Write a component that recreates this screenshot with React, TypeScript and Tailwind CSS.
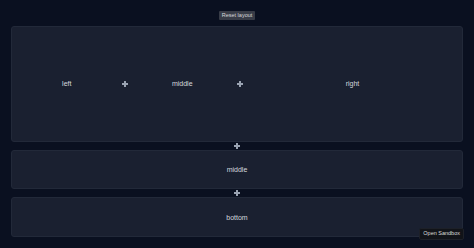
import React from 'react'

const font = { fontFamily: '"Liberation Sans", Arial, sans-serif' }

function Grip() {
  return (
    <svg width="6" height="6" viewBox="0 0 6 6" className="text-[#9aa3b2]">
      <path d="M3 0.5v5M0.5 3h5" stroke="currentColor" strokeWidth="2" strokeLinecap="round" />
    </svg>
  )
}

function VHandle() {
  return (
    <div className="w-[6px] flex items-center justify-center">
      <Grip />
    </div>
  )
}

function HHandle() {
  return (
    <div className="h-[8px] flex items-center justify-center">
      <Grip />
    </div>
  )
}

function Label({ children }: { children: React.ReactNode }) {
  return <span className="text-[7px] leading-none text-[#d5d8de]">{children}</span>
}

export default function App() {
  return (
    <div className="h-screen w-full bg-[#0a1020] px-[11px] pt-[11px] pb-[11px] flex flex-col" style={font}>
      {/* Toolbar */}
      <div className="flex justify-center mb-[6px]">
        <button className="h-[9px] px-[2.5px] bg-[#383c47] text-[5.5px] leading-none text-[#d6d8dc] rounded-[1px]">
          Reset layout
        </button>
      </div>

      {/* Panels */}
      <div className="flex-1 flex flex-col">
        <div className="flex-[117] flex bg-[#1a2030] border border-[#222939] rounded-[3px]">
          <div className="flex-[25] flex items-center justify-center">
            <Label>left</Label>
          </div>
          <VHandle />
          <div className="flex-[25] flex items-center justify-center">
            <Label>middle</Label>
          </div>
          <VHandle />
          <div className="flex-[50] flex items-center justify-center">
            <Label>right</Label>
          </div>
        </div>
        <HHandle />
        <div className="flex-[38] flex items-center justify-center bg-[#1a2030] border border-[#222939] rounded-[3px]">
          <Label>middle</Label>
        </div>
        <HHandle />
        <div className="flex-[39] flex items-center justify-center bg-[#1a2030] border border-[#222939] rounded-[3px]">
          <Label>bottom</Label>
        </div>
      </div>

      {/* Sandbox link */}
      <button className="fixed right-[10px] bottom-[8px] h-[12px] px-[3px] bg-[#111318] border border-[#1d2028] text-[5.5px] leading-none text-[#dcdcdc] rounded-[2px]">
        Open Sandbox
      </button>
    </div>
  )
}
